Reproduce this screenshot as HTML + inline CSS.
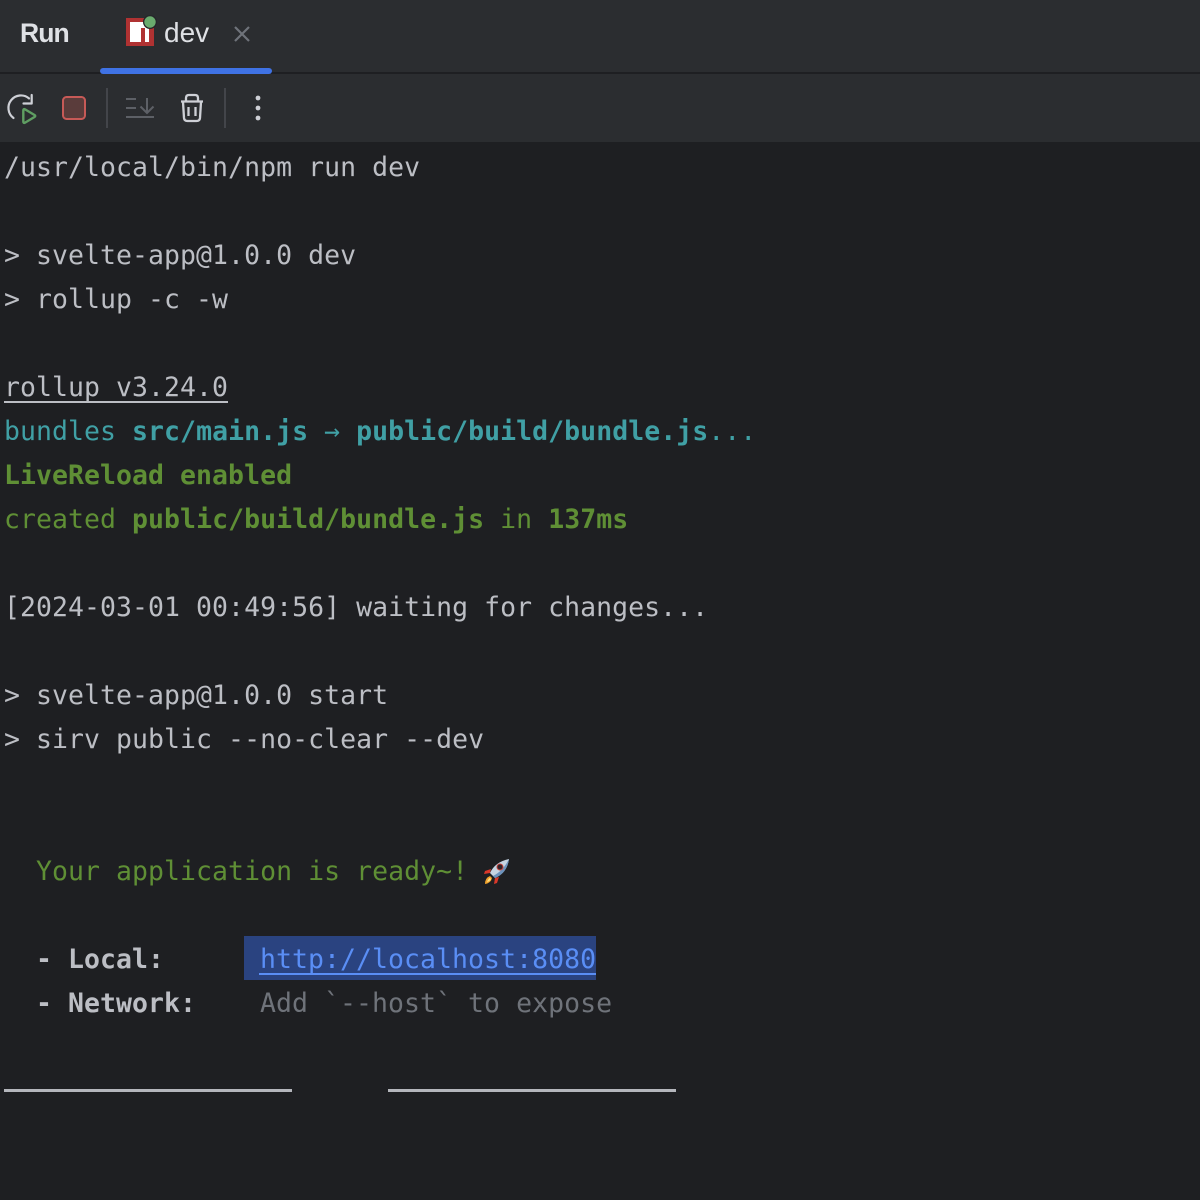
<!DOCTYPE html>
<html><head><meta charset="utf-8"><style>
html,body{margin:0;padding:0}
body{width:1200px;height:1200px;background:#1e1f22;position:relative;overflow:hidden}
.a{position:absolute}
.l{position:absolute;left:4px;margin-top:2px;height:44px;line-height:44px;white-space:pre;font-family:"DejaVu Sans Mono","Liberation Mono",monospace;font-size:26.5px;letter-spacing:.05px;color:#bcbec4}
.t{color:#40a0a5}.g{color:#5f8f35}b{font-weight:bold}
.u{position:absolute;background:#bcbec4;height:2px}
</style></head><body>
<div class="a" style="left:0;top:0;width:1200px;height:72px;background:#2b2d30"></div>
<div class="a" style="left:0;top:72px;width:1200px;height:2px;background:#1e1f22"></div>
<div class="a" style="left:0;top:74px;width:1200px;height:68px;background:#2b2d30"></div>
<div class="a" style="left:100px;top:68px;width:172px;height:6px;border-radius:3px;background:#3f72e4"></div>
<div class="a" style="left:20px;top:15px;font:bold 26.5px/36px 'Liberation Sans',sans-serif;letter-spacing:-.9px;color:#dfe1e5">Run</div>
<div class="a" style="left:164px;top:15px;font:28px/36px 'Liberation Sans',sans-serif;color:#dfe1e5">dev</div>
<svg class="a" style="left:0;top:0" width="290" height="142" viewBox="0 0 290 142" fill="none">
<rect x="126" y="18" width="28" height="28" fill="#b03232"/>
<rect x="130" y="22" width="11" height="20" fill="#fff"/>
<rect x="141" y="22" width="6" height="6" fill="#fff"/>
<rect x="145" y="28" width="4" height="14" fill="#fff"/>
<circle cx="150" cy="22" r="7" fill="#25262a"/>
<circle cx="150" cy="22" r="5.700" fill="#6aab6e"/>
<path d="M235 27L249 41M249 27L235 41" stroke="#6f737a" stroke-width="2.2"/>
<path d="M29 98.400A12.500 12.500 0 1 0 13.500 118" stroke="#ced0d6" stroke-width="2.200" stroke-linecap="round"/>
<path d="M31.700 95V103.500H23.500" stroke="#ced0d6" stroke-width="2.200" stroke-linejoin="round" stroke-linecap="round"/>
<path d="M23.300 110.500Q23.300 108.300 25.300 109.500L34.500 115Q36 116 34.500 117L25.300 122.500Q23.300 123.700 23.300 121.500Z" fill="#2b2d30" stroke="#5f9e62" stroke-width="2.400" stroke-linejoin="round"/>
<rect x="63" y="97" width="22" height="22" rx="3.500" fill="#5a3c3b" stroke="#c75a57" stroke-width="2"/>
<rect x="106" y="88" width="2" height="40" fill="#43454a"/>
<rect x="224" y="88" width="2" height="40" fill="#43454a"/>
<path d="M126 99H136M126 108H136M126 117H154M147 98V113M140.500 106.500L147 113L153.500 106.500" stroke="#5d6066" stroke-width="2"/>
<path d="M181 101.500H203M186 101V98Q186 95 189 95H195Q198 95 198 98V101M183 102L184 118Q184.300 121 187.500 121H196.500Q199.700 121 200 118L201 102M188.500 107V116M195.500 107V116" stroke="#ced0d6" stroke-width="2.300"/>
<circle cx="258" cy="98" r="2.400" fill="#ced0d6"/><circle cx="258" cy="108" r="2.400" fill="#ced0d6"/><circle cx="258" cy="118" r="2.400" fill="#ced0d6"/>
</svg>
<div class="l" style="top:144px">/usr/local/bin/npm run dev</div>
<div class="l" style="top:232px">&gt; svelte-app@1.0.0 dev</div>
<div class="l" style="top:276px">&gt; rollup -c -w</div>
<div class="l" style="top:364px">rollup v3.24.0</div>
<div class="u" style="left:4px;top:401px;width:224px"></div>
<div class="l t" style="top:408px">bundles <b>src/main.js</b> → <b>public/build/bundle.js</b>...</div>
<div class="l g" style="top:452px"><b>LiveReload enabled</b></div>
<div class="l g" style="top:496px">created <b>public/build/bundle.js</b> in <b>137ms</b></div>
<div class="l" style="top:584px">[2024-03-01 00:49:56] waiting for changes...</div>
<div class="l" style="top:672px">&gt; svelte-app@1.0.0 start</div>
<div class="l" style="top:716px">&gt; sirv public --no-clear --dev</div>
<div class="l g" style="top:848px">  Your application is ready~!</div>
<svg class="a" style="left:482px;top:856px" width="30" height="30" viewBox="0 0 30 30">
<path d="M9 13L3 15L2 18L8 17Z" fill="#d9382a"/><path d="M17 21L15 27L12 28L13 22Z" fill="#d9382a"/>
<path d="M8 20Q3 22 3 28Q9 27 10 22Z" fill="#f2a22c"/><path d="M7.500 22Q5.500 24 5 26Q8 25 9 23Z" fill="#fde58a"/>
<path d="M8 17Q13 6 27 3Q25 17 13 22Z" fill="#c6d4e2"/><path d="M27 3Q25 17 13 22L11 20Q21 15 27 3Z" fill="#6c93bd"/>
<circle cx="18" cy="11" r="3" fill="#30232a" stroke="#c4433c" stroke-width="1"/>
</svg>
<div class="a" style="left:244px;top:936px;width:352px;height:44px;background:#2a4380"></div>
<div class="l" style="top:936px">  <b>- Local:</b></div>
<div class="l" style="top:936px;left:260px;color:#5a8ef5">http://localhost:8080</div>
<div class="u" style="left:259px;top:973px;width:337px;background:#5a8ef5"></div>
<div class="l" style="top:980px">  <b>- Network:</b></div>
<div class="l" style="top:980px;left:260px;color:#6f737a">Add `--host` to expose</div>
<div class="u" style="left:4px;top:1089px;width:288px;height:3px;background:#b4b6bc"></div>
<div class="u" style="left:388px;top:1089px;width:288px;height:3px;background:#b4b6bc"></div>
</body></html>
